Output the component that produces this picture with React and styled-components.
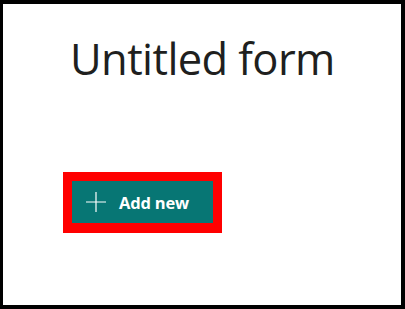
import React from "react";
import styled, { createGlobalStyle } from "styled-components";

const GlobalStyle = createGlobalStyle`
  html, body {
    margin: 0;
    padding: 0;
    background: #fff;
  }
`;

const Frame = styled.div`
  box-sizing: border-box;
  width: 405px;
  height: 309px;
  border: 4px solid #000;
  border-left-width: 3px;
  background: #fff;
  display: flex;
  flex-direction: column;
  padding: 25px 0 0 60px;
  font-family: "Open Sans", "Liberation Sans", sans-serif;
`;

const Title = styled.h1`
  margin: 0 0 0 7px;
  font-size: 43.5px;
  font-weight: 400;
  line-height: 60px;
  color: #201f1e;
  letter-spacing: -0.6px;
`;

const Highlight = styled.div`
  align-self: flex-start;
  margin-top: 83px;
  border: 9px solid #f00;
  border-bottom-width: 10px;
`;

const AddButton = styled.button`
  display: flex;
  align-items: center;
  gap: 13px;
  width: 141px;
  height: 42px;
  padding: 0 0 0 14px;
  border: none;
  background: #077674;
  color: #fff;
  font-family: inherit;
  font-size: 16.5px;
  font-weight: 700;
  letter-spacing: -0.2px;
  cursor: pointer;
`;

const PlusIcon = () => (
  <svg width="20" height="20" viewBox="0 0 20 20">
    <path d="M10 0V20M0 10H20" stroke="#fff" strokeWidth="1.2" />
  </svg>
);

export default function App() {
  return (
    <>
      <GlobalStyle />
      <Frame>
        <Title>Untitled form</Title>
        <Highlight>
          <AddButton>
            <PlusIcon />
            Add new
          </AddButton>
        </Highlight>
      </Frame>
    </>
  );
}
